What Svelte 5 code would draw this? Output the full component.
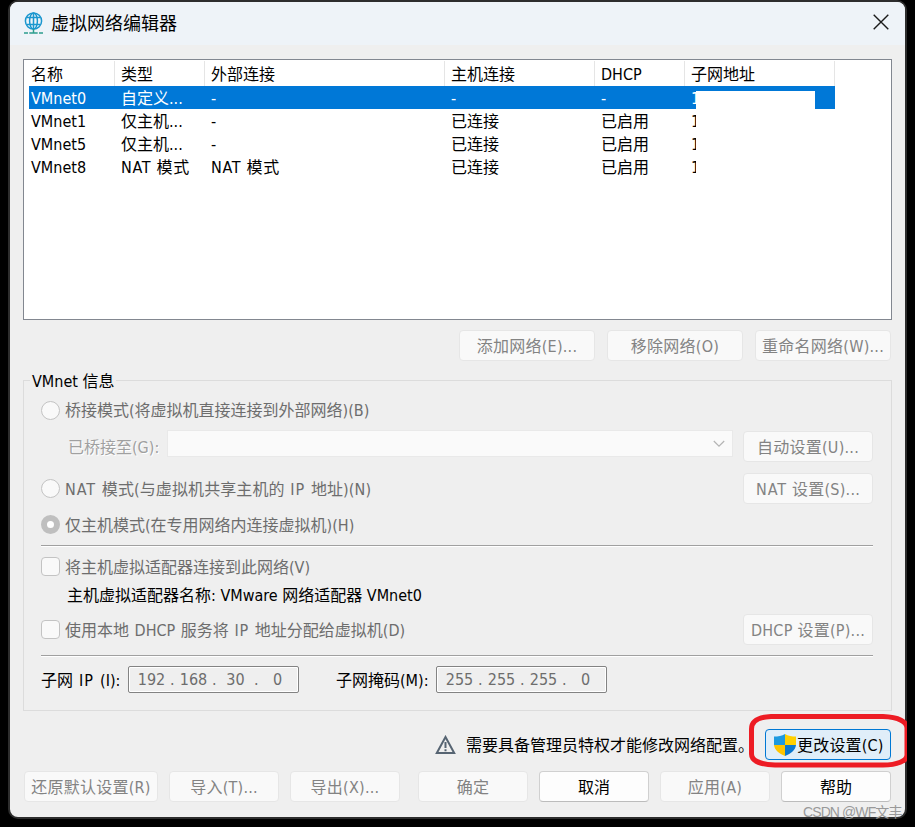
<script>
  const columns = ["名称", "类型", "外部连接", "主机连接", "DHCP", "子网地址"];

  let networks = [
    ["VMnet0", "自定义...", "-", "-", "-", "1"],
    ["VMnet1", "仅主机...", "-", "已连接", "已启用", "1"],
    ["VMnet5", "仅主机...", "-", "已连接", "已启用", "1"],
    ["VMnet8", "NAT 模式", "NAT 模式", "已连接", "已启用", "1"],
  ];

  let selected = 0;

  const subnetIp = ["192", "168", "30", "0"];
  const subnetMask = ["255", "255", "255", "0"];
</script>

<div class="window">
  <header class="titlebar">
    <svg class="globe" width="20" height="23" viewBox="0 0 20 23" fill="none">
      <g stroke="#1b97cf" stroke-width="1.5">
        <circle cx="9.5" cy="9" r="8.1" />
        <ellipse cx="9.5" cy="9" rx="3.9" ry="8.1" />
        <path d="M9.5 1v16M2.7 5.500h13.6M2.7 12.500h13.6" />
      </g>
      <path d="M9.5 17v4M0 21h4M5.3 21h8.4M15 21h4" stroke="#2c9d8d" stroke-width="1.5" />
    </svg>
    <h1>虚拟网络编辑器</h1>
    <svg class="close" width="16" height="16" viewBox="0 0 16 16">
      <path d="M.7.7l14.6 14.6M15.3.7L.7 15.3" stroke="#1a1a1a" stroke-width="1.4" />
    </svg>
  </header>

  <main>
    <!-- network list -->
    <div class="list">
      <div class="line head">
        {#each columns as column}
          <span>{column}</span>
        {/each}
      </div>
      {#each networks as network, i}
        <div class="line" class:selected={i === selected} on:click={() => (selected = i)}>
          {#each network as value}
            <span class:wide={value.startsWith("NAT")}>{value}</span>
          {/each}
        </div>
      {/each}
      <div class="mask"></div>
    </div>

    <div class="list-buttons">
      <button disabled>添加网络(E)...</button>
      <button disabled>移除网络(O)</button>
      <button disabled>重命名网络(W)...</button>
    </div>

    <section class="group">
      <span class="legend">VMnet 信息</span>

      <div class="row bridge"><i class="radio"></i><span>桥接模式(将虚拟机直接连接到外部网络)(B)</span></div>
      <div class="row bridge-to">
        <span class="etched">已桥接至(G):</span>
        <div class="combo">
          <svg width="12" height="8" viewBox="0 0 12 8">
            <path d="M.8 1l5.2 5.2L11.200 1" fill="none" stroke="#b4b4b4" stroke-width="1.2" />
          </svg>
        </div>
        <button disabled>自动设置(U)...</button>
      </div>
      <div class="row nat">
        <i class="radio"></i><span><em>NAT</em> 模式(与虚拟机共享主机的 <em>IP</em> 地址)(N)</span>
        <button disabled><em>NAT</em> 设置(S)...</button>
      </div>
      <div class="row host"><i class="radio on"></i><span>仅主机模式(在专用网络内连接虚拟机)(H)</span></div>

      <hr />

      <div class="row adapter"><i class="check"></i><span>将主机虚拟适配器连接到此网络(V)</span></div>
      <div class="row adapter-name"><span>主机虚拟适配器名称: VMware 网络适配器 VMnet0</span></div>
      <div class="row dhcp">
        <i class="check"></i><span>使用本地 DHCP 服务将 <em>IP</em> 地址分配给虚拟机(D)</span>
        <button disabled>DHCP 设置(P)...</button>
      </div>

      <hr />

      <div class="row subnet">
        <span class="ip-label">子网 <em>IP</em> (I):</span>
        <div class="ip">
          {#each subnetIp as part, i}
            {#if i > 0}<b>.</b>{/if}<span>{part}</span>
          {/each}
        </div>
        <span class="mask-label">子网掩码(M):</span>
        <div class="ip">
          {#each subnetMask as part, i}
            {#if i > 0}<b>.</b>{/if}<span>{part}</span>
          {/each}
        </div>
      </div>
    </section>

    <div class="notice">
      <svg width="21" height="20" viewBox="0 0 21 20" fill="none">
        <path d="M10.500 2L19.200 18H1.800Z" stroke="#566472" stroke-width="2" />
        <path d="M10.500 7v6M10.500 14.200v2" stroke="#566472" stroke-width="2" />
      </svg>
      <span>需要具备管理员特权才能修改网络配置。</span>
      <button class="change">
        <svg width="22" height="22" viewBox="0 0 22 22">
          <path d="M11 0C8 2 4 2.500 0 2.500V11H11Z" fill="#1d9ae0" />
          <path d="M11 0C14 2 18 2.500 22 2.500V11H11Z" fill="#ffd000" />
          <path d="M0 11H11V22C5 19.500 .5 16 0 11Z" fill="#fec400" />
          <path d="M22 11H11V22C17 19.500 21.500 16 22 11Z" fill="#0b78cf" />
        </svg>更改设置(C)
      </button>
    </div>

    <div class="footer">
      <button class="reset" disabled>还原默认设置(R)</button>
      <button disabled>导入(T)...</button>
      <button disabled>导出(X)...</button>
      <button class="ok" disabled>确定</button>
      <button>取消</button>
      <button disabled>应用(A)</button>
      <button>帮助</button>
    </div>
  </main>
</div>

<!-- hand drawn highlight and watermark -->
<svg class="highlight" width="158" height="56" viewBox="0 0 158 56">
  <path
    d="M22 3.500H134C150 4 158 9 158 15V42C158 48 148 52 134 52H26C10 51.500 2.500 47 2.500 41V16C2.500 8 10 4 22 3.500Z"
    fill="none"
    stroke="#ed1c24"
    stroke-width="5"
  />
</svg>
<div class="watermark">CSDN @WF文丰</div>

<style>
  :global(body) {
    background: #000;
    overflow: hidden;
  }
  .window {
    box-sizing: border-box;
    width: 899px;
    height: 819px;
    margin-left: 8px;
    border: 2px solid #2d2d2d;
    border-radius: 10px;
    background: #efefef;
    overflow: hidden;
    font-family: "DejaVu Sans Condensed", "DejaVu Sans", "Noto Sans CJK SC", sans-serif;
    font-stretch: condensed;
    font-size: 16px;
    line-height: 20px;
    color: #000;
    white-space: nowrap;
  }
  .titlebar {
    display: flex;
    align-items: center;
    height: 43px;
    background: #eef3f8;
    padding: 0 16px 0 14px;
    box-sizing: border-box;
  }
  .globe {
    margin-top: -1px;
  }
  h1 {
    flex: 1;
    margin: 0 0 4px 7px;
    font: 18px/24px "Noto Sans CJK SC", sans-serif;
  }
  .close {
    margin-bottom: 3px;
  }
  main {
    padding: 14px 13px 0;
  }
  em {
    font-style: normal;
    letter-spacing: 1px;
  }
  .list {
    position: relative;
    box-sizing: border-box;
    height: 261px;
    border: 1px solid #828790;
    background: #fff;
    padding: 1px 0 0 5px;
  }
  .line {
    display: grid;
    grid-template-columns: 86px 90px 240px 150px 90px 150px;
    width: 806px;
    height: 23px;
    line-height: 25px;
  }
  .line span {
    padding-left: 6px;
  }
  .line span:first-child {
    padding-left: 2px;
  }
  .line .wide {
    letter-spacing: 0.7px;
  }
  .head {
    height: 25px;
    line-height: 27px;
  }
  .head span {
    height: 25px;
    border-right: 1px solid #e5e5e5;
  }
  .selected {
    background: #0078d7;
    color: #fff;
  }
  .mask {
    position: absolute;
    left: 672px;
    top: 31px;
    width: 119px;
    height: 90px;
    background: #fff;
  }
  button {
    box-sizing: border-box;
    height: 31px;
    padding: 2px 0 0;
    border: 1px solid #d0d0d0;
    border-bottom-color: #bcbcbc;
    border-radius: 4px;
    background: #fdfdfd;
    font: inherit;
    color: #000;
  }
  button:disabled {
    border-color: #e6e6e6;
    background: #f9f9f9;
    color: #838383;
    letter-spacing: 0.25px;
  }
  .list-buttons {
    display: flex;
    justify-content: flex-end;
    gap: 12px;
    padding: 10px 1px 0 0;
  }
  .list-buttons button {
    width: 136px;
  }
  .group {
    position: relative;
    box-sizing: border-box;
    height: 331px;
    margin-top: 19px;
    border: 1px solid #dcdcdc;
    padding: 0 18px 0 17px;
  }
  .legend {
    position: absolute;
    left: 6px;
    top: -9px;
    padding: 0 2px;
    background: #efefef;
  }
  .row {
    display: flex;
    align-items: center;
    color: #6d6d6d;
  }
  .row > span {
    padding-top: 2px;
  }
  .row button {
    width: 130px;
    margin-left: auto;
  }
  .radio,
  .check {
    box-sizing: border-box;
    width: 19px;
    height: 19px;
    margin-right: 5px;
    border: 1px solid #c3c3c3;
    border-radius: 4px;
    background: #f9f9f9;
  }
  .radio {
    border-radius: 50%;
  }
  .radio.on {
    border: 6px solid #bfbfbf;
    background: #fff;
  }
  .bridge {
    padding-top: 15px;
    height: 28px;
  }
  .bridge-to {
    margin-top: 7px;
    height: 31px;
  }
  .etched {
    width: 99px;
    padding-left: 27px;
    color: #a0a0a0;
    text-shadow: 1px 1px #fff;
  }
  .combo {
    box-sizing: border-box;
    display: flex;
    align-items: center;
    justify-content: flex-end;
    align-self: flex-start;
    width: 566px;
    height: 27px;
    margin-top: -1px;
    padding-right: 7px;
    border: 1px solid #e9e9e9;
    background: #fafafa;
  }
  .nat {
    margin-top: 11px;
  }
  .nat span {
    letter-spacing: 0.1px;
    word-spacing: 1px;
  }
  .nat span em {
    letter-spacing: 1px;
  }
  .host {
    margin-top: 7px;
    height: 27px;
  }
  hr {
    height: 1px;
    margin: 7px 0 0;
    border: 0;
    background: #a0a0a0;
    border-bottom: 1px solid #fff;
  }
  .adapter {
    margin-top: 10px;
    height: 19px;
  }
  .adapter-name {
    margin-top: 10px;
    height: 19px;
    padding-left: 26px;
    color: #000;
  }
  .adapter-name > span {
    padding-top: 0;
  }
  .dhcp {
    margin-top: 9px;
    margin-bottom: 10px;
  }
  .dhcp > span {
    word-spacing: 1px;
  }
  .subnet {
    margin-top: 9px;
    height: 27px;
    color: #000;
  }
  .ip-label {
    width: 87px;
    word-spacing: 1.5px;
  }
  .mask-label {
    width: 100px;
    margin-left: 37px;
  }
  .ip {
    box-sizing: border-box;
    display: flex;
    width: 171px;
    height: 27px;
    padding-left: 4px;
    border: 1px solid #838383;
    border-radius: 2px;
    box-shadow: inset 0 0 0 1px #fff;
    line-height: 25px;
    color: #6d6d6d;
  }
  .ip span {
    width: 37px;
    text-align: center;
  }
  .ip b {
    width: 5px;
    font-weight: normal;
  }
  .notice {
    display: flex;
    align-items: center;
    height: 31px;
    margin-top: 18px;
    padding-left: 412px;
  }
  .notice span {
    width: 299px;
    margin-left: 10px;
    padding-top: 2px;
  }
  .change {
    display: flex;
    align-items: center;
    width: 126px;
    padding-left: 8px;
    border-color: #0078d4;
    background: #e0eef9;
    letter-spacing: 0.2px;
  }
  .change svg {
    margin: -2px 1px 0 0;
  }
  .footer {
    display: flex;
    gap: 11px;
    padding: 11px 0 0 1px;
  }
  .footer button {
    width: 110px;
  }
  .footer .reset {
    width: 134px;
  }
  .footer .ok {
    margin-left: 7px;
  }
  .highlight {
    position: absolute;
    left: 749px;
    top: 713px;
  }
  .watermark {
    position: absolute;
    left: 803px;
    top: 803px;
    font: 14px/18px "Liberation Sans", "Noto Sans CJK SC", sans-serif;
    letter-spacing: -0.9px;
    color: #999;
    white-space: nowrap;
  }
</style>
